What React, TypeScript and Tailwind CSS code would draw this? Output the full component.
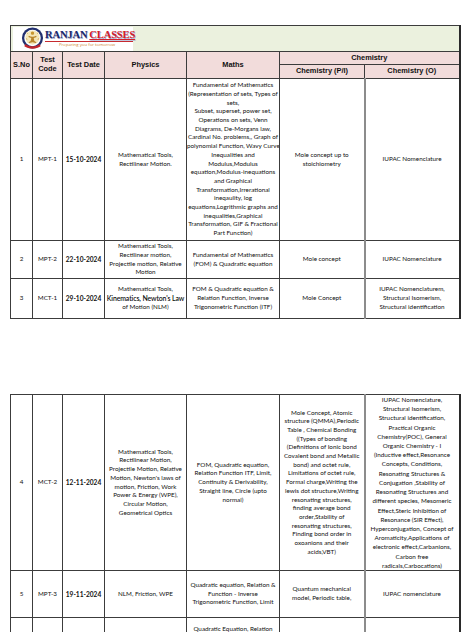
import React from "react";

type Cell = React.ReactNode[];

type Row = {
  h: string;
  n: string;
  code: string;
  date: string;
  phy: Cell;
  maths: Cell;
  chemPI: Cell;
  chemO: Cell;
  chemOLeading?: string;
  mathsTop?: boolean;
};

const firstRows: Row[] = [
  {
    h: "h-[162px]",
    n: "1",
    code: "MPT-1",
    date: "15-10-2024",
    phy: ["Mathematical Tools,", "Rectilinear Motion."],
    maths: [
      "Fundamental of Mathematics",
      "(Representation of sets, Types of",
      "sets,",
      "Subset, superset, power set,",
      "Operations on sets, Venn",
      "Diagrams, De-Morgans law,",
      "Cardinal No. problems,, Graph of",
      "polynomial Function, Wavy Curve",
      "Inequalities and",
      "Modulus,Modulus",
      "equation,Modulus-inequations",
      "and Graphical",
      "Transformation,Irrerational",
      "ineqaulity, log",
      "equations,Logrithmic graphs and",
      "inequalities,Graphical",
      "Transformation,  GIF & Fractional",
      "Part Function)",
    ],
    chemPI: ["Mole concept up to", "stoichiometry"],
    chemO: ["IUPAC Nomenclature"],
  },
  {
    h: "h-[38px]",
    n: "2",
    code: "MPT-2",
    date: "22-10-2024",
    phy: ["Mathematical Tools,", "Rectilinear motion,", "Projectile motion, Relative", "Motion"],
    maths: ["Fundamental of Mathematics", "(FOM) & Quadratic equation"],
    chemPI: ["Mole concept"],
    chemO: ["IUPAC Nomenclature"],
  },
  {
    h: "h-[40px]",
    n: "3",
    code: "MCT-1",
    date: "29-10-2024",
    phy: [
      "Mathematical Tools,",
      <span key="k" className="text-[6.9px] font-semibold tracking-[-0.1px]">
        Kinematics, Newton's Law
      </span>,
      "of Motion (NLM)",
    ],
    maths: ["FOM & Quadratic equation &", "Relation Function, Inverse", "Trigonometric Function (ITF)"],
    chemPI: ["Mole Concept"],
    chemO: ["IUPAC Nomenclaturem,", "Structural Isomerism,", "Structural identification"],
  },
];

const secondRows: Row[] = [
  {
    h: "h-[176px]",
    n: "4",
    code: "MCT-2",
    date: "12-11-2024",
    phy: [
      "Mathematical Tools,",
      "Rectilinear Motion,",
      "Projectile Motion, Relative",
      "Motion, Newton's laws of",
      "motion, Friction, Work",
      "Power & Energy (WPE),",
      "Circular Motion,",
      "Geometrical Optics",
    ],
    maths: [
      "FOM, Quadratic equation,",
      "Relation Function ITF, Limit,",
      "Continuity & Derivability,",
      "Straight line, Circle (upto",
      "normal)",
    ],
    chemPI: [
      "Mole Concept, Atomic",
      "structure (QMMA),Periodic",
      "Table , Chemical Bonding",
      "((Types of bonding",
      "(Definitions of Ionic bond",
      "Covalent bond and Metallic",
      "bond) and octet rule,",
      "Limitations of octet rule,",
      "Formal charge,Writing the",
      "lewis dot structure,Writing",
      "resonating structures,",
      "finding average bond",
      "order,Stability of",
      "resonating structures,",
      "Finding bond order in",
      "oxoanions and their",
      "acids,VBT)",
    ],
    chemO: [
      "IUPAC Nomenclature,",
      "Structural Isomerism,",
      "Structural identification,",
      "Practical Organic",
      "Chemistry(POC), General",
      "Organic Chemistry - I",
      "(Inductive effect,Resonance",
      "Concepts, Conditions,",
      "Resonating Structures &",
      "Conjugation ,Stability of",
      "Resonating Structures and",
      "different species, Mesomeric",
      "Effect,Steric Inhibition of",
      "Resonance (SIR Effect),",
      "Hyperconjugation, Concept of",
      "Aromaticity,Applications of",
      "electronic effect,Carbanions,",
      "Carbon free",
      "radicals,Carbocations)",
    ],
    chemOLeading: "leading-[9.2px]",
  },
  {
    h: "h-[47px]",
    n: "5",
    code: "MPT-3",
    date: "19-11-2024",
    phy: ["NLM, Friction, WPE"],
    maths: ["Quadratic equation, Relation &", "Function - Inverse", "Trigonometric Function, Limit"],
    chemPI: ["Quantum mechanical", "model, Periodic table,"],
    chemO: ["IUPAC nomenclature"],
  },
  {
    h: "h-[90px]",
    n: "",
    code: "",
    date: "",
    phy: [],
    maths: ["Quadratic Equation, Relation", "& Function, Limit,", "Continuity"],
    chemPI: [],
    chemO: [],
    mathsTop: true,
  },
];

const bd = "border border-[#3c3c3c]";
const bodyText = "font-['Lato',sans-serif] text-[6.3px] leading-[8.7px] text-[#111]";
const headText = "font-['Liberation_Sans',Arial,sans-serif] text-[7.4px] font-bold leading-[8.6px] text-[#111]";

function Lines({ lines }: { lines: Cell }) {
  return (
    <>
      {lines.map((l, i) => (
        <div key={i} className="whitespace-nowrap">
          {l}
        </div>
      ))}
    </>
  );
}

function Cols() {
  return (
    <colgroup>
      <col className="w-[22px]" />
      <col className="w-[30px]" />
      <col className="w-[42px]" />
      <col className="w-[82px]" />
      <col className="w-[93px]" />
      <col className="w-[85px]" />
      <col className="w-[95px]" />
    </colgroup>
  );
}

function BodyRow({ r }: { r: Row }) {
  const td = `${bd} p-0 text-center align-middle overflow-hidden`;
  return (
    <tr className={r.h}>
      <td className={td}>{r.n}</td>
      <td className={td}>{r.code}</td>
      <td className={`${td} font-bold text-[6.6px]`}>{r.date}</td>
      <td className={td}>
        <Lines lines={r.phy} />
      </td>
      <td className={`${td} ${r.mathsTop ? "!align-top pt-[7px]" : ""}`}>
        <Lines lines={r.maths} />
      </td>
      <td className={`${td} border-r-[2px] border-r-[#8c8c8c]`}>
        <Lines lines={r.chemPI} />
      </td>
      <td className={`${td} border-r-[2px] border-r-[#2a2a2a] ${r.chemOLeading ?? ""}`}>
        <Lines lines={r.chemO} />
      </td>
    </tr>
  );
}

function Emblem() {
  return (
    <svg width="23" height="23" viewBox="0 0 24 24" className="shrink-0">
      <circle cx="12" cy="11.5" r="11" fill="#22306f" />
      <circle cx="12" cy="11.5" r="8.6" fill="#ffffff" />
      <circle cx="12" cy="11" r="7.4" fill="#f4e7b8" />
      <path d="M12 4.8c1 0 1.7.8 1.7 1.7S13 8.2 12 8.2s-1.7-.8-1.7-1.7.7-1.7 1.7-1.7z" fill="#c7962f" />
      <path
        d="M8.2 9.2c1.2.6 2.5.9 3.8.9s2.6-.3 3.8-.9l.5 1.2c-.9.5-1.9.9-3 1l.6 3.2 2.2 1.3-.5.9-3.6-.8-3.6.8-.5-.9 2.2-1.3.6-3.2c-1.1-.1-2.1-.5-3-1z"
        fill="#b9862a"
      />
      <path d="M6.6 12.8l-1.4-.6M17.4 12.8l1.4-.6M7 6.8l-1.2-.9M17 6.8l1.2-.9" stroke="#c7962f" strokeWidth="0.8" />
      <path d="M4.5 17.8c2 1.6 4.6 2.4 7.5 2.4s5.5-.8 7.5-2.4l1 2.2c-2.4 1.6-5.4 2.6-8.5 2.6s-6.1-1-8.5-2.6z" fill="#c3262c" />
    </svg>
  );
}

function Logo() {
  return (
    <div className="flex h-[24px] w-[120px] items-center gap-[1px] bg-white pl-[8px]">
      <Emblem />
      <div className="flex flex-col items-start">
        <div className="flex items-baseline font-['Liberation_Serif',serif] text-[10.6px] font-bold leading-[10px] tracking-[-0.2px] [text-shadow:0.6px_0.6px_0_#9aa3c9]">
          <span className="text-[#1d2a6b]">RANJAN</span>
          <span className="ml-[2px] text-[#d3202a] underline decoration-[#d3202a] decoration-[1px] underline-offset-[1px]">
            CLASSES
          </span>
        </div>
        <div className="mt-[0.5px] h-[1px] w-[88px] bg-[#c62a2f]" />
        <div className="ml-[14px] whitespace-nowrap font-['Open_Sans',sans-serif] text-[4.3px] leading-[5px] text-[#d0822e]">
          Preparing you for tomorrow
        </div>
      </div>
    </div>
  );
}

export default function App() {
  return (
    <div className="h-[632px] w-[474px] overflow-hidden bg-white pl-[10px] pt-[25px]">
      <table className={`w-[449px] table-fixed border-collapse ${bodyText}`}>
        <Cols />
        <tbody>
          <tr className="h-[26px]">
            <td colSpan={7} className={`${bd} border-r-[2px] border-r-[#2a2a2a] bg-[#ebf1de] p-0 pl-[2px] align-middle`}>
              <Logo />
            </td>
          </tr>
          <tr className={`h-[13px] bg-[#f2dcdb] ${headText}`}>
            <td rowSpan={2} className={`${bd} p-0 text-center`}>S.No</td>
            <td rowSpan={2} className={`${bd} p-0 text-center`}>
              Test
              <br />
              Code
            </td>
            <td rowSpan={2} className={`${bd} p-0 text-center`}>Test Date</td>
            <td rowSpan={2} className={`${bd} p-0 text-center`}>Physics</td>
            <td rowSpan={2} className={`${bd} p-0 text-center`}>Maths</td>
            <td colSpan={2} className={`${bd} border-r-[2px] border-r-[#2a2a2a] p-0 text-center`}>Chemistry</td>
          </tr>
          <tr className={`h-[14px] bg-[#f2dcdb] ${headText}`}>
            <td className={`${bd} p-0 text-center`}>Chemistry (P/I)</td>
            <td className={`${bd} border-r-[2px] border-r-[#2a2a2a] p-0 text-center`}>Chemistry (O)</td>
          </tr>
          {firstRows.map((r) => (
            <BodyRow key={r.n} r={r} />
          ))}
        </tbody>
      </table>

      <div className="h-[75px]" />

      <table className={`w-[449px] table-fixed border-collapse ${bodyText}`}>
        <Cols />
        <tbody>
          {secondRows.map((r, i) => (
            <BodyRow key={i} r={r} />
          ))}
        </tbody>
      </table>
    </div>
  );
}
